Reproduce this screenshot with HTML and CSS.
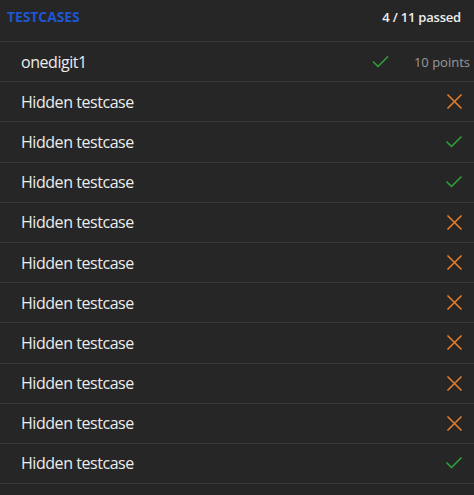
FILE: index.html
```html
<!DOCTYPE html>
<html lang="en">
<head>
<meta charset="utf-8">
<title>Testcases</title>
<link rel="stylesheet" href="styles.css">
</head>
<body>
<div class="panel">
  <div class="header">
    <span class="title">TESTCASES</span>
    <span class="summary">4 / 11 passed</span>
  </div>
  <ul class="list">
    <li class="row">
      <span class="name">onedigit1</span>
      <svg class="icon check first" viewBox="0 0 16 12" width="16" height="12"><path d="M1 6 L5.5 10.5 L15 1"/></svg>
      <span class="points">10 points</span>
    </li>
    <li class="row"><span class="name">Hidden testcase</span><svg class="icon cross" viewBox="0 0 15 15" width="15" height="15"><path d="M1 1 L14 14 M14 1 L1 14"/></svg></li>
    <li class="row"><span class="name">Hidden testcase</span><svg class="icon check" viewBox="0 0 16 12" width="16" height="12"><path d="M1 6 L5.5 10.5 L15 1"/></svg></li>
    <li class="row"><span class="name">Hidden testcase</span><svg class="icon check" viewBox="0 0 16 12" width="16" height="12"><path d="M1 6 L5.5 10.5 L15 1"/></svg></li>
    <li class="row"><span class="name">Hidden testcase</span><svg class="icon cross" viewBox="0 0 15 15" width="15" height="15"><path d="M1 1 L14 14 M14 1 L1 14"/></svg></li>
    <li class="row"><span class="name">Hidden testcase</span><svg class="icon cross" viewBox="0 0 15 15" width="15" height="15"><path d="M1 1 L14 14 M14 1 L1 14"/></svg></li>
    <li class="row"><span class="name">Hidden testcase</span><svg class="icon cross" viewBox="0 0 15 15" width="15" height="15"><path d="M1 1 L14 14 M14 1 L1 14"/></svg></li>
    <li class="row"><span class="name">Hidden testcase</span><svg class="icon cross" viewBox="0 0 15 15" width="15" height="15"><path d="M1 1 L14 14 M14 1 L1 14"/></svg></li>
    <li class="row"><span class="name">Hidden testcase</span><svg class="icon cross" viewBox="0 0 15 15" width="15" height="15"><path d="M1 1 L14 14 M14 1 L1 14"/></svg></li>
    <li class="row"><span class="name">Hidden testcase</span><svg class="icon cross" viewBox="0 0 15 15" width="15" height="15"><path d="M1 1 L14 14 M14 1 L1 14"/></svg></li>
    <li class="row"><span class="name">Hidden testcase</span><svg class="icon check" viewBox="0 0 16 12" width="16" height="12"><path d="M1 6 L5.5 10.5 L15 1"/></svg></li>
  </ul>
</div>
</body>
</html>
```
FILE: styles.css
```css
html, body {
  margin: 0;
  padding: 0;
  background: #262626;
  height: 100%;
}
body {
  font-family: "Open Sans", "Noto Sans", sans-serif;
  color: #ececec;
}
.panel {
  width: 474px;
}
.header {
  height: 41px;
  display: flex;
  align-items: center;
  justify-content: space-between;
  padding: 0 13px 8px 7px;
  box-sizing: border-box;
}
.title {
  font-size: 14px;
  font-weight: 700;
  color: #1f55cf;
  letter-spacing: -0.1px;
}
.summary {
  font-size: 13px;
  font-weight: 600;
  color: #eeeeee;
  letter-spacing: -0.2px;
}
.list {
  list-style: none;
  margin: 0;
  padding: 0;
  border-bottom: 1px solid #3a3a3a;
}
.row {
  height: 39.2px;
  border-top: 1px solid #3a3a3a;
  display: flex;
  align-items: center;
  padding: 0 12px 0 21px;
}
.name {
  flex: 1;
  font-size: 16px;
  letter-spacing: -0.45px;
  color: #ececec;
}
.icon {
  fill: none;
  stroke-width: 1.7;
  stroke-linecap: round;
  stroke-linejoin: round;
}
.check {
  stroke: #2f9e3a;
}
.cross {
  stroke: #e07b2c;
}
.check.first {
  margin-right: 25px;
  width: 17px;
}
.points {
  font-size: 13px;
  color: #9a9a9a;
  margin-right: -8px;
}
```
